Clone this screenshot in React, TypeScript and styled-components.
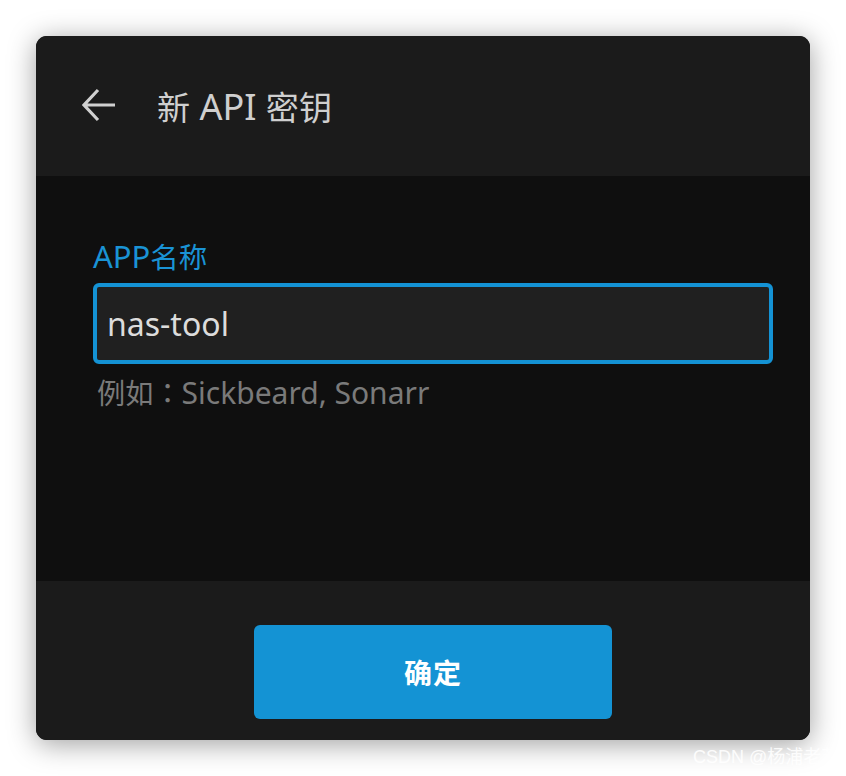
import React from "react";
import styled, { createGlobalStyle } from "styled-components";

const Global = createGlobalStyle`
  html, body { margin: 0; padding: 0; background: #ffffff; }
  body { font-family: "Noto Sans", "Noto Sans CJK SC", sans-serif; }
`;

const Page = styled.div`
  position: relative;
  width: 846px;
  height: 776px;
  padding: 36px;
  box-sizing: border-box;
`;

const Card = styled.div`
  width: 774px;
  height: 704px;
  border-radius: 11px;
  overflow: hidden;
  display: flex;
  flex-direction: column;
  box-shadow: 0 4px 28px rgba(0, 0, 0, 0.38);
  background: #1b1b1b;
`;

const Header = styled.div`
  height: 140px;
  flex: none;
  display: flex;
  align-items: center;
  padding-left: 46px;
  background: #1b1b1b;
`;

const BackButton = styled.button`
  border: 0;
  background: transparent;
  padding: 0;
  width: 34px;
  height: 34px;
  display: flex;
  align-items: center;
  justify-content: center;
  cursor: pointer;
  margin-top: -2px;
`;

const Title = styled.h1`
  margin: 0 0 0 41px;
  font-size: 36px;
  font-weight: 400;
  color: #cfcfcf;
  line-height: 44px;
`;

const Cjk = styled.span<{ $scale?: number }>`
  font-family: "Noto Sans CJK SC", sans-serif;
  font-size: ${(p) => p.$scale ?? 0.92}em;
`;

const Punct = styled.span`
  font-family: "Noto Sans CJK JP", sans-serif;
  font-size: 0.94em;
`;

const Body = styled.div`
  flex: none;
  height: 405px;
  background: #0f0f0f;
  padding: 60px 37px 0 57px;
  box-sizing: border-box;
  display: flex;
  flex-direction: column;
`;

const Label = styled.label`
  font-size: 31px;
  line-height: 40px;
  color: #1a93d5;
  margin-bottom: 7px;
`;

const Input = styled.input`
  height: 81px;
  box-sizing: border-box;
  border: 4px solid #1492d4;
  border-radius: 6px;
  background: #202020;
  color: #dcdcdc;
  font-family: "Noto Sans", "Noto Sans CJK SC", sans-serif;
  font-size: 32px;
  padding: 0 0 0 10px;
  outline: none;
`;

const Hint = styled.div`
  margin: 8px 0 0 4px;
  font-size: 30px;
  line-height: 40px;
  color: #7a7a7a;
`;

const Footer = styled.div`
  flex: 1;
  background: #1b1b1b;
  display: flex;
  align-items: flex-start;
  padding: 44px 0 0 218px;
`;

const PrimaryButton = styled.button`
  width: 358px;
  height: 94px;
  border: 0;
  border-radius: 6px;
  background: #1493d4;
  color: #ffffff;
  font-family: "Noto Sans CJK SC", "Noto Sans", sans-serif;
  font-size: 28px;
  font-weight: 700;
  letter-spacing: 1px;
  cursor: pointer;
`;

const Watermark = styled.div`
  position: absolute;
  left: 693px;
  top: 746px;
  font-family: "Liberation Sans", "Noto Sans CJK SC", sans-serif;
  font-size: 18px;
  line-height: 22px;
  color: rgba(255, 255, 255, 0.9);
  white-space: nowrap;
`;

const ArrowLeft = () => (
  <svg width="34" height="34" viewBox="0 0 34 34" fill="none">
    <path
      d="M33 17H3M16 2L2 17L16 32"
      stroke="#d0d0d0"
      strokeWidth="3.2"
      strokeLinecap="butt"
      strokeLinejoin="miter"
    />
  </svg>
);

export default function App() {
  return (
    <>
      <Global />
      <Page>
        <Card>
          <Header>
            <BackButton aria-label="back">
              <ArrowLeft />
            </BackButton>
            <Title>
              <Cjk>新</Cjk> API <Cjk>密钥</Cjk>
            </Title>
          </Header>
          <Body>
            <Label>
              APP<Cjk>名称</Cjk>
            </Label>
            <Input defaultValue="nas-tool" />
            <Hint>
              <Cjk $scale={0.94}>例如</Cjk>
              <Punct>：</Punct>Sickbeard, Sonarr
            </Hint>
          </Body>
          <Footer>
            <PrimaryButton>确定</PrimaryButton>
          </Footer>
        </Card>
        <Watermark>CSDN @杨浦老苏</Watermark>
      </Page>
    </>
  );
}
